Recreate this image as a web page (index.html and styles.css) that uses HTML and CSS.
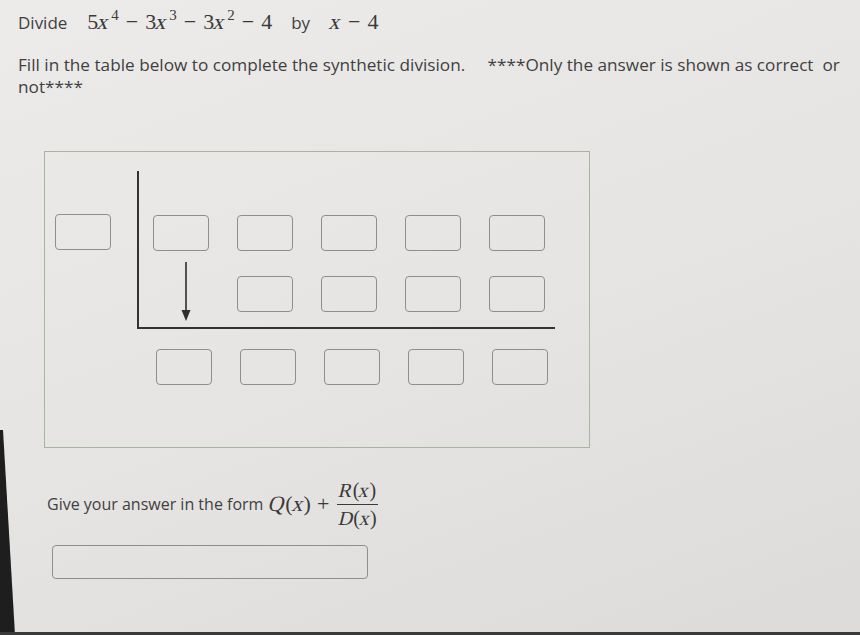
FILE: index.html
```html
<!DOCTYPE html>
<html lang="en">
<head>
<meta charset="utf-8">
<title>Synthetic division</title>
<link rel="stylesheet" href="styles.css">
</head>
<body>
<div class="page">
  <p class="prompt"><span class="word">Divide</span><span class="math">5<i>x</i><sup>4</sup><span class="op">−</span>3<i>x</i><sup>3</sup><span class="op">−</span>3<i>x</i><sup>2</sup><span class="op">−</span>4</span><span class="word by">by</span><span class="math"><i>x</i><span class="op">−</span>4</span></p>
  <p class="instr">Fill in the table below to complete the synthetic division.&nbsp;&nbsp;&nbsp;&nbsp; ****Only the answer is shown as correct&nbsp; or not****</p>

  <div class="frame">
    <div class="top">
      <div class="divisor"><span class="cell"></span></div>
      <div class="ell">
        <div class="row">
          <span class="cell"></span><span class="cell"></span><span class="cell"></span><span class="cell"></span><span class="cell"></span>
        </div>
        <div class="row row2">
          <svg class="arrow" width="56" height="60" viewBox="0 0 56 60" aria-hidden="true">
            <line x1="33" y1="0" x2="33" y2="50" stroke="#2e2e2e" stroke-width="1.6"/>
            <polygon points="28.5,48 37.5,48 33,59" fill="#2e2e2e"/>
          </svg>
          <span class="cell"></span><span class="cell"></span><span class="cell"></span><span class="cell"></span>
        </div>
      </div>
    </div>
    <div class="row row3">
      <span class="cell"></span><span class="cell"></span><span class="cell"></span><span class="cell"></span><span class="cell"></span>
    </div>
  </div>

  <div class="answer-line">
    <span class="word">Give your answer in the form</span>
    <span class="math form"><i>Q</i>(<i>x</i>)<span class="op">+</span></span>
    <span class="frac"><span class="num"><i>R</i>(<i>x</i>)</span><span class="den"><i>D</i>(<i>x</i>)</span></span>
  </div>
  <div class="answer-box"></div>
</div>
<div class="bezel-left"></div>
<div class="bezel-bottom"></div>
</body>
</html>
```

FILE: styles.css
```css
html, body {
  margin: 0;
  padding: 0;
  width: 860px;
  height: 635px;
  overflow: hidden;
}
body {
  background: linear-gradient(160deg, #ecebea 0%, #e6e4e3 55%, #dddbda 100%);
  font-family: "Open Sans", "Liberation Sans", sans-serif;
  color: #3f3f3f;
  position: relative;
}
.page {
  padding: 9px 0 0 18px;
}
.prompt {
  margin: 0;
  height: 28px;
  display: flex;
  align-items: baseline;
  font-size: 17px;
}
.word {
  font-family: "Open Sans", "Liberation Sans", sans-serif;
}
i {
  display: inline-block;
  font-style: normal;
  transform: skewX(-14deg);
}
.math {
  font-family: "Liberation Serif", "DejaVu Serif", serif;
  font-size: 22px;
  color: #3a3a3a;
  margin-left: 20px;
}
.math sup {
  font-size: 15px;
  vertical-align: 9px;
  line-height: 0;
  margin-left: 2px;
}
.op {
  margin: 0 7px;
}
.by {
  margin-left: 19px;
}
.instr {
  margin: 17px 0 0 0;
  width: 835px;
  font-size: 17.2px;
  line-height: 22px;
}

.frame {
  margin: 53px 0 0 26px;
  width: 546px;
  height: 297px;
  box-sizing: border-box;
  border: 1px solid #a8b3a1;
  padding-top: 19px;
}
.top {
  display: flex;
}
.divisor {
  width: 92px;
  padding: 43px 0 0 10px;
  box-sizing: border-box;
}
.ell {
  width: 418px;
  height: 158px;
  box-sizing: border-box;
  border-left: 2px solid #333;
  border-bottom: 2px solid #333;
  padding: 44px 0 0 14px;
}
.row {
  display: flex;
  gap: 28px;
}
.row2 {
  margin-top: 25px;
}
.arrow {
  display: block;
  margin: -14px 0 -10px 0;
}
.row3 {
  margin: 20px 0 0 111px;
}
.cell {
  display: block;
  width: 56px;
  height: 36px;
  box-sizing: border-box;
  border: 1px solid #8e8e8e;
  border-radius: 4px;
}

.answer-line {
  margin: 27px 0 0 29px;
  display: flex;
  align-items: center;
  height: 58px;
}
.answer-line .word {
  font-size: 16px;
}
.form {
  margin-left: 6px;
  font-size: 22px;
}
.form .op {
  margin: 0 8px 0 6px;
}
.frac {
  display: inline-flex;
  flex-direction: column;
  align-items: center;
  font-family: "Liberation Serif", "DejaVu Serif", serif;
  font-size: 20px;
  color: #3a3a3a;
  line-height: 25px;
}
.num {
  border-bottom: 1.5px solid #3a3a3a;
  padding: 0 2px 1px;
}
.den {
  padding-top: 1px;
}
.answer-box {
  margin: 12px 0 0 34px;
  width: 316px;
  height: 34px;
  box-sizing: border-box;
  border: 1px solid #8e8e8e;
  border-radius: 4px;
}

.bezel-left {
  position: absolute;
  left: 0;
  top: 430px;
  width: 18px;
  height: 205px;
  background: #1e1e1e;
  clip-path: polygon(0 0, 3px 0, 15px 100%, 0 100%);
}
.bezel-bottom {
  position: absolute;
  left: 0;
  bottom: 0;
  width: 860px;
  height: 3px;
  background: #3a3a3a;
}
```
